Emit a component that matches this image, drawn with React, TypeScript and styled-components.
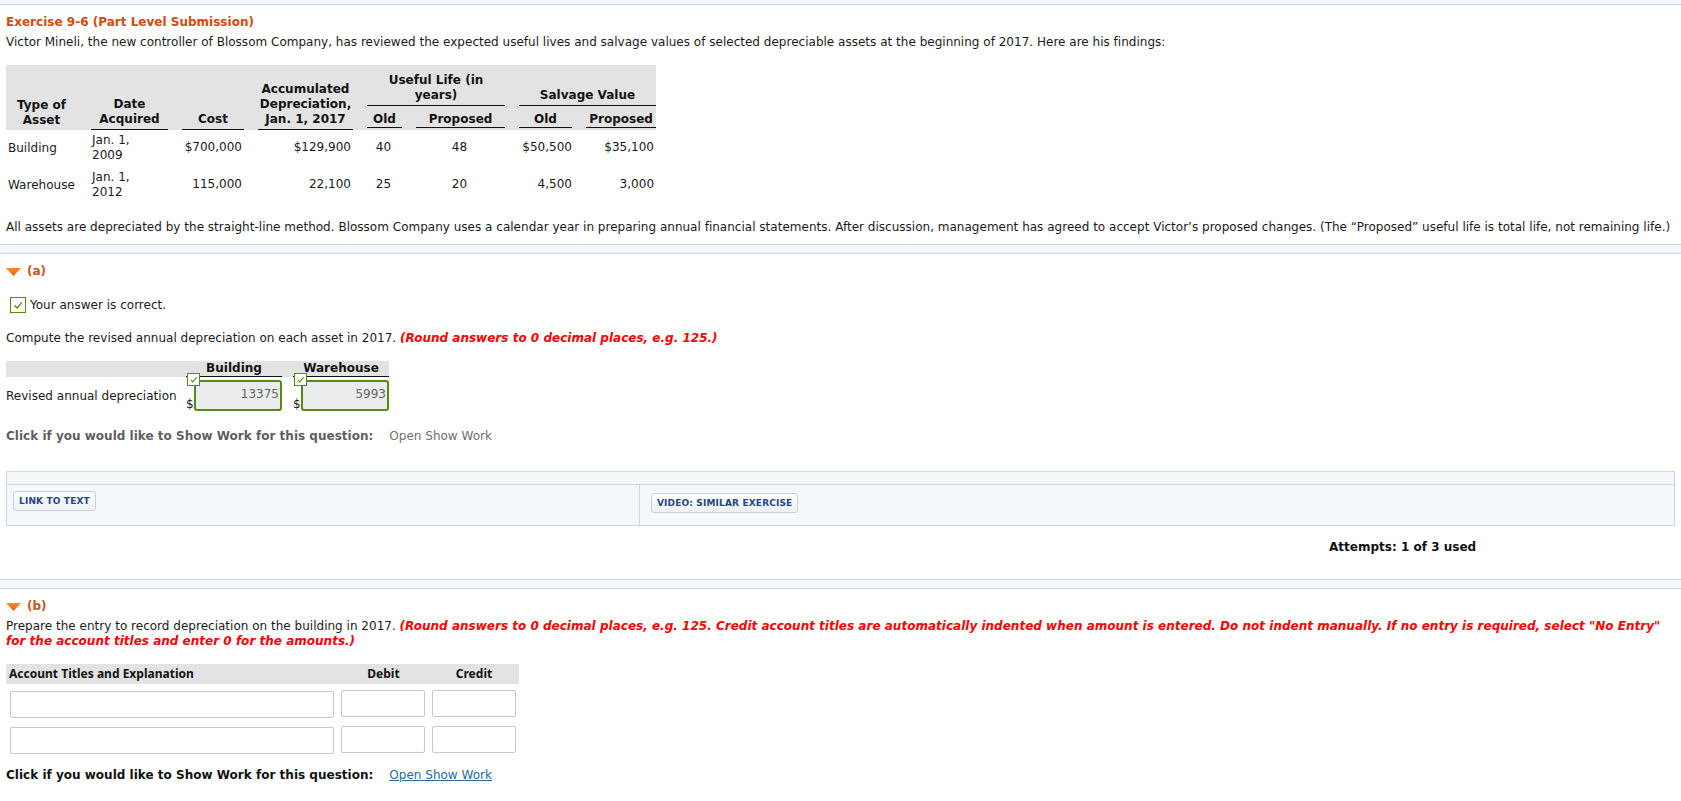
import React from 'react';
import styled, {createGlobalStyle} from 'styled-components';

const GlobalStyle = createGlobalStyle`
  html, body {
    margin: 0;
    padding: 0;
    background: #fff;
  }
  body {
    font-family: "DejaVu Sans", Verdana, sans-serif;
    font-size: 12px;
    line-height: 15px;
    letter-spacing: 0.012px;
    color: #1a1a1a;
  }
`;

const Check = ({size}: {size: number}) => (
    <svg width={size} height={size} viewBox="0 0 16 16">
        <path d="M4 8.5 L7 11.5 L12.5 5" fill="none" stroke="#5a8a0a" strokeWidth="1.6"/>
    </svg>
);

const Arrow = () => (
    <svg width="15" height="8" viewBox="0 0 15 8">
        <defs>
            <linearGradient id="arrowFill" x1="0" y1="0" x2="0" y2="1">
                <stop offset="0" stopColor="#ff8a2a"/>
                <stop offset="1" stopColor="#f25c05"/>
            </linearGradient>
        </defs>
        <path d="M0 0 H15 L7.5 8 Z" fill="url(#arrowFill)"/>
    </svg>
);

export default function App() {
    return (
        <Page>
            <GlobalStyle/>
            <Band $first/>

            <Intro>
                <Title>Exercise 9-6 (Part Level Submission)</Title>
                <Text>Victor Mineli, the new controller of Blossom Company, has reviewed the expected useful lives and salvage values of selected depreciable assets at the beginning of 2017. Here are his findings:</Text>
                <AssetTable>
                    <colgroup>
                        <col width="78"/>
                        <col width="91"/>
                        <col width="76"/>
                        <col width="109"/>
                        <col width="49"/>
                        <col width="103"/>
                        <col width="67"/>
                        <col width="77"/>
                    </colgroup>
                    <thead>
                        <tr>
                            <HeadCell rowSpan={2} $lead>Type of<br/>Asset</HeadCell>
                            <HeadCell rowSpan={2}><Under>Date<br/>Acquired</Under></HeadCell>
                            <HeadCell rowSpan={2}><Under>Cost</Under></HeadCell>
                            <HeadCell rowSpan={2}><Under>Accumulated<br/>Depreciation,<br/>Jan. 1, 2017</Under></HeadCell>
                            <HeadCell colSpan={2}><GroupLine>Useful Life (in<br/>years)</GroupLine></HeadCell>
                            <HeadCell colSpan={2} $tight><GroupLine>Salvage Value</GroupLine></HeadCell>
                        </tr>
                        <tr>
                            <HeadCell><SubUnder>Old</SubUnder></HeadCell>
                            <HeadCell><SubUnder>Proposed</SubUnder></HeadCell>
                            <HeadCell><SubUnder>Old</SubUnder></HeadCell>
                            <HeadCell $tight><SubUnder>Proposed</SubUnder></HeadCell>
                        </tr>
                    </thead>
                    <tbody>
                        <AssetRow name="Building" year="2009" cost="$700,000" acc="$129,900" old="40" prop="48" sOld="$50,500" sProp="$35,100"/>
                        <AssetRow name="Warehouse" year="2012" cost="115,000" acc="22,100" old="25" prop="20" sOld="4,500" sProp="3,000"/>
                    </tbody>
                </AssetTable>
                <Text>All assets are depreciated by the straight-line method. Blossom Company uses a calendar year in preparing annual financial statements. After discussion, management has agreed to accept Victor’s proposed changes. (The “Proposed” useful life is total life, not remaining life.)</Text>
            </Intro>

            <Band/>

            <PartA>
                <PartHead><Arrow/><PartLabel>(a)</PartLabel></PartHead>
                <Correct>
                    <CheckBox><Check size={14}/></CheckBox>
                    <span>Your answer is correct.</span>
                </Correct>
                <Text>Compute the revised annual depreciation on each asset in 2017. <Hint>(Round answers to 0 decimal places, e.g. 125.)</Hint></Text>
                <AnswerGrid>
                    <AnswerHeadBlank/>
                    <AnswerHead>Building</AnswerHead>
                    <AnswerHeadBlank/>
                    <AnswerHead>Warehouse</AnswerHead>
                    <AnswerLabel>Revised annual depreciation</AnswerLabel>
                    <AnswerCell value="13375"/>
                    <span/>
                    <AnswerCell value="5993"/>
                </AnswerGrid>
                <ShowWork $muted>
                    <strong>Click if you would like to Show Work for this question:</strong>
                    <MutedLink>Open Show Work</MutedLink>
                </ShowWork>
                <LinkPanel>
                    <PanelTop/>
                    <PanelRow>
                        <PanelCell><LinkButton>LINK TO TEXT</LinkButton></PanelCell>
                        <PanelCell $split><LinkButton $low>VIDEO: SIMILAR EXERCISE</LinkButton></PanelCell>
                    </PanelRow>
                </LinkPanel>
                <Attempts>Attempts: 1 of 3 used</Attempts>
            </PartA>

            <Band/>

            <PartB>
                <PartHead $tight><Arrow/><PartLabel>(b)</PartLabel></PartHead>
                <Text>Prepare the entry to record depreciation on the building in 2017. <Hint>(Round answers to 0 decimal places, e.g. 125. Credit account titles are automatically indented when amount is entered. Do not indent manually. If no entry is required, select "No Entry" for the account titles and enter 0 for the amounts.)</Hint></Text>
                <JournalHeader>
                    <JournalHead>Account Titles and Explanation</JournalHead>
                    <JournalHead $center>Debit</JournalHead>
                    <JournalHead $center>Credit</JournalHead>
                </JournalHeader>
                <JournalRow>
                    <TitleInput/>
                    <AmountInput/>
                    <AmountInput/>
                </JournalRow>
                <JournalRow>
                    <TitleInput/>
                    <AmountInput/>
                    <AmountInput/>
                </JournalRow>
                <ShowWork $spaced>
                    <strong>Click if you would like to Show Work for this question:</strong>
                    <WorkLink href="#">Open Show Work</WorkLink>
                </ShowWork>
            </PartB>
        </Page>
    );
}

type AssetRowProps = {
    name: string; year: string; cost: string; acc: string;
    old: string; prop: string; sOld: string; sProp: string;
};

const AssetRow = ({name, year, cost, acc, old, prop, sOld, sProp}: AssetRowProps) => (
    <tr>
        <NameCell>{name}</NameCell>
        <DateCell>Jan. 1,<br/>{year}</DateCell>
        <NumCell>{cost}</NumCell>
        <NumCell>{acc}</NumCell>
        <NumCell $center>{old}</NumCell>
        <NumCell $center>{prop}</NumCell>
        <NumCell $snug>{sOld}</NumCell>
        <NumCell $tight>{sProp}</NumCell>
    </tr>
);

const AnswerCell = ({value}: {value: string}) => (
    <AnswerWrap>
        <TinyCheck><Check size={11}/></TinyCheck>
        <Dollar>$</Dollar>
        <AnswerBox>{value}</AnswerBox>
    </AnswerWrap>
);

const Page = styled.div`
  width: 1681px;
  height: 801px;
  overflow: hidden;
`;

const Band = styled.div<{$first?: boolean}>`
  height: ${p => (p.$first ? '4px' : '8px')};
  background: #f4f7fb;
  border-bottom: 1px solid #cdd6e5;
  border-top: ${p => (p.$first ? 'none' : '1px solid #cdd6e5')};
`;

const Intro = styled.section`
  padding: 10px 6px 9px;
`;

const Title = styled.h2`
  margin: 0 0 5px;
  font-size: 12px;
  line-height: 15px;
  font-weight: 700;
  color: #d9480f;
`;

const Text = styled.p`
  margin: 0;
`;

const AssetTable = styled.table`
  border-collapse: separate;
  border-spacing: 0;
  table-layout: fixed;
  width: 650px;
  margin: 15px 0 16px;
`;

const HeadCell = styled.th<{$tight?: boolean; $lead?: boolean}>`
  background: #e3e3e3;
  vertical-align: bottom;
  text-align: center;
  font-weight: 700;
  color: #111;
  padding: ${p => (p.$lead ? '0 7px 2px 0' : p.$tight ? '0 0 0 7px' : '0 7px')};
`;

const Under = styled.div`
  border-bottom: 1px solid #111;
  padding-bottom: 2px;
`;

const GroupLine = styled.div`
  border-bottom: 1px solid #111;
  padding: 8px 0 2px;
`;

const SubUnder = styled.div`
  border-bottom: 1px solid #111;
  margin-bottom: 2px;
  padding-top: 6px;
`;

const NameCell = styled.td`
  padding: 0 0 0 2px;
  vertical-align: middle;
  white-space: nowrap;
`;

const DateCell = styled.td`
  padding: 3px 5px 4px 8px;
`;

const NumCell = styled.td<{$center?: boolean; $tight?: boolean; $snug?: boolean}>`
  padding: 0 ${p => (p.$tight ? '2px' : p.$snug ? '7px' : '9px')} 3px 7px;
  text-align: ${p => (p.$center ? 'center' : 'right')};
  vertical-align: middle;
`;

const PartA = styled.section`
  padding: 10px 6px 0;
  height: 325px;
  box-sizing: border-box;
`;

const PartB = styled.section`
  padding: 10px 6px 0;
`;

const PartHead = styled.div<{$tight?: boolean}>`
  display: flex;
  align-items: center;
  gap: 6px;
  height: 15px;
  margin-bottom: ${p => (p.$tight ? '5px' : '18px')};
`;

const PartLabel = styled.span`
  font-weight: 700;
  color: #c9541c;
`;

const Correct = styled.div`
  display: flex;
  align-items: center;
  gap: 4px;
  margin: 0 0 18px 4px;
  height: 16px;
`;

const CheckBox = styled.span`
  display: flex;
  align-items: center;
  justify-content: center;
  width: 14px;
  height: 14px;
  border: 1px solid #5a8a0a;
  background: #fff;
`;

const Hint = styled.em`
  color: #f00;
  font-weight: 700;
  font-style: italic;
`;

const AnswerGrid = styled.div`
  display: grid;
  grid-template-columns: 180px 96px 11px 96px;
  margin: 15px 0 18px;
  width: 383px;
`;

const AnswerHeadBlank = styled.div`
  background: #e3e3e3;
  height: 16px;
`;

const AnswerHead = styled.div`
  background: #e3e3e3;
  height: 15px;
  border-bottom: 1px solid #111;
  text-align: center;
  font-weight: 700;
  color: #111;
`;

const AnswerLabel = styled.div`
  padding-top: 12px;
`;

const AnswerWrap = styled.div`
  position: relative;
  display: flex;
  align-items: flex-end;
  gap: 1px;
  padding-top: 3px;
`;

const TinyCheck = styled.span`
  position: absolute;
  left: 1px;
  top: -4px;
  display: flex;
  align-items: center;
  justify-content: center;
  width: 11px;
  height: 11px;
  border: 1px solid #5a8a0a;
  background: #fff;
`;

const Dollar = styled.span`
  width: 7px;
  line-height: 14px;
`;

const AnswerBox = styled.div`
  flex: 1;
  box-sizing: border-box;
  height: 31px;
  border: 2px solid #5a8a0a;
  border-radius: 3px;
  background: #ebecee;
  color: #666;
  text-align: right;
  line-height: 24px;
  padding-right: 1px;
`;

const ShowWork = styled.div<{$muted?: boolean; $spaced?: boolean}>`
  display: flex;
  gap: 16px;
  margin-top: ${p => (p.$spaced ? '14px' : '0')};
  color: ${p => (p.$muted ? '#5f5f5f' : '#111')};
  height: 15px;
`;

const MutedLink = styled.span`
  color: #6f6f6f;
`;

const WorkLink = styled.a`
  color: #2a6a9e;
  text-decoration: underline;
`;

const LinkPanel = styled.div`
  margin-top: 27px;
  width: 1669px;
  box-sizing: border-box;
  border: 1px solid #cdd6e5;
  background: #f5f8fb;
`;

const PanelTop = styled.div`
  height: 12px;
  border-bottom: 1px solid #cdd6e5;
`;

const PanelRow = styled.div`
  display: grid;
  grid-template-columns: 632px 1fr;
  height: 40px;
`;

const PanelCell = styled.div<{$split?: boolean}>`
  padding-left: ${p => (p.$split ? '11px' : '6px')};
  border-left: ${p => (p.$split ? '1px solid #cdd6e5' : 'none')};
`;

const LinkButton = styled.button<{$low?: boolean}>`
  display: block;
  margin-top: ${p => (p.$low ? '8px' : '6px')};
  height: 20px;
  padding: 0 5px;
  border: 1px solid #ccd0d6;
  border-radius: 3px;
  background: linear-gradient(#ffffff, #eef0f3);
  color: #24487f;
  font-family: "DejaVu Sans", Verdana, sans-serif;
  font-size: 9px;
  letter-spacing: 0.15px;
  font-weight: 700;
`;

const Attempts = styled.div`
  margin: 14px 0 0 1323px;
  font-weight: 700;
  color: #111;
`;

const JournalHeader = styled.div`
  display: grid;
  grid-template-columns: 332px 91px 90px;
  width: 513px;
  margin: 15px 0 6px;
`;

const JournalHead = styled.div<{$center?: boolean}>`
  background: #e3e3e3;
  height: 20px;
  font-family: "Noto Sans", sans-serif;
  font-size: 12px;
  line-height: 20px;
  font-weight: 700;
  color: #111;
  padding-left: ${p => (p.$center ? '0' : '3px')};
  text-align: ${p => (p.$center ? 'center' : 'left')};
`;

const JournalRow = styled.div`
  display: grid;
  grid-template-columns: 332px 91px 90px;
  align-items: start;
  width: 513px;
  height: 28px;
  & + & {
    margin-top: 8px;
  }
`;

const TitleInput = styled.input`
  box-sizing: border-box;
  width: 324px;
  height: 27px;
  margin: 1px 0 0 4px;
  border: 1px solid #c8c8c8;
  border-radius: 2px;
  background: #fff;
`;

const AmountInput = styled.input`
  box-sizing: border-box;
  width: 84px;
  height: 27px;
  margin: 0 0 0 3px;
  border: 1px solid #c8c8c8;
  border-radius: 2px;
  background: #fff;
`;
